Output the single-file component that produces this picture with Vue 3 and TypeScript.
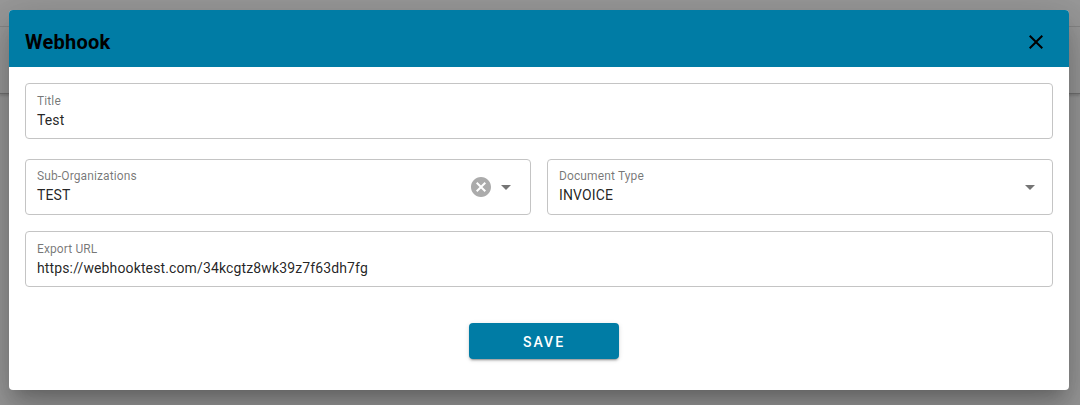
<script setup lang="ts">
const subOrg = 'TEST'
</script>

<template>
  <div class="page">
    <div class="backdrop">
      <div class="strip-top"></div>
      <div class="strip-mid"></div>
    </div>
    <section class="dialog">
      <header class="head">
        <h2>Webhook</h2>
        <svg class="close" width="24" height="24" viewBox="0 0 24 24"><path d="M19 6.41 17.59 5 12 10.59 6.41 5 5 6.41 10.59 12 5 17.59 6.41 19 12 13.41 17.59 19 19 17.59 13.41 12z" /></svg>
      </header>
      <div class="body">
        <div class="field">
          <span class="label">Title</span>
          <span class="value">Test</span>
        </div>
        <div class="row">
          <div class="field select">
            <div class="text">
              <span class="label">Sub-Organizations</span>
              <span class="value">{{ subOrg }}</span>
            </div>
            <svg class="clear" width="24" height="24" viewBox="0 0 24 24"><path d="M12 2C6.47 2 2 6.47 2 12s4.47 10 10 10 10-4.47 10-10S17.53 2 12 2zm5 13.59L15.59 17 12 13.41 8.41 17 7 15.59 10.59 12 7 8.41 8.41 7 12 10.59 15.59 7 17 8.41 13.41 12 17 15.59z" /></svg>
            <svg class="arrow" width="24" height="24" viewBox="0 0 24 24"><path d="M7 10l5 5 5-5z" /></svg>
          </div>
          <div class="field select solo">
            <div class="text">
              <span class="label">Document Type</span>
              <span class="value">INVOICE</span>
            </div>
            <svg class="arrow" width="24" height="24" viewBox="0 0 24 24"><path d="M7 10l5 5 5-5z" /></svg>
          </div>
        </div>
        <div class="field">
          <span class="label">Export URL</span>
          <span class="value">https://webhooktest.com/34kcgtz8wk39z7f63dh7fg</span>
        </div>
        <div class="actions">
          <button type="button" class="save">SAVE</button>
        </div>
      </div>
    </section>
  </div>
</template>

<style scoped>
.page {
  position: relative;
  width: 1080px;
  height: 405px;
  box-sizing: border-box;
  padding: 10px 11px 15px 9px;
  overflow: hidden;
  font-family: Roboto, "Liberation Sans", sans-serif;
  background: #999;
}
.backdrop {
  position: absolute;
  inset: 0;
}
.strip-top {
  height: 27px;
  border-bottom: 1px solid #868686;
  box-sizing: border-box;
}
.strip-mid {
  height: 67px;
  border-bottom: 1px solid #727272;
  box-sizing: border-box;
  box-shadow: 0 2px 2px rgba(0,0,0,.14);
}
.dialog {
  position: relative;
  display: flex;
  flex-direction: column;
  height: 380px;
  border-radius: 4px;
  overflow: hidden;
  background: #fff;
  box-shadow: 0 11px 15px -7px rgba(0,0,0,.2), 0 24px 38px 3px rgba(0,0,0,.14), 0 9px 46px 8px rgba(0,0,0,.12);
}
.head {
  display: flex;
  align-items: center;
  justify-content: space-between;
  box-sizing: border-box;
  height: 57px;
  padding: 6px 21px 0 16px;
  background: #007ca5;
}
.head h2 {
  margin: 0;
  font-size: 20px;
  font-weight: 700;
  letter-spacing: .25px;
  color: #000;
}
.close {
  fill: #000;
}
.body {
  display: flex;
  flex-direction: column;
  padding: 16px 16px 0;
}
.field {
  display: flex;
  flex-direction: column;
  box-sizing: border-box;
  height: 56px;
  padding: 10px 11px 0;
  border: 1px solid #c4c4c4;
  border-radius: 4px;
}
.row {
  display: grid;
  grid-template-columns: 506px 506px;
  gap: 16px;
  margin: 20px 0 16px;
}
.select {
  flex-direction: row;
  align-items: center;
  padding: 0 11px;
}
.text {
  display: flex;
  flex-direction: column;
  flex: 1;
  margin-top: -1px;
}
.label {
  font-size: 12px;
  line-height: 14px;
  letter-spacing: .12px;
  color: rgba(0,0,0,.55);
}
.value {
  margin-top: 3px;
  font-size: 14px;
  line-height: 18px;
  letter-spacing: .13px;
  color: rgba(0,0,0,.87);
}
.clear {
  fill: #ababab;
  margin-right: 1px;
}
.arrow {
  fill: rgba(0,0,0,.54);
  margin-right: 1px;
}
.solo .arrow {
  margin-right: -1px;
}
.actions {
  display: flex;
  justify-content: center;
  margin-top: 36px;
  padding-left: 10px;
}
.save {
  width: 150px;
  height: 36px;
  padding: 2px 0 0;
  border: 0;
  border-radius: 4px;
  background: #007ca5;
  color: #fff;
  font-family: inherit;
  font-size: 14px;
  font-weight: 500;
  letter-spacing: 2px;
  box-shadow: 0 3px 1px -2px rgba(0,0,0,.2), 0 2px 2px 0 rgba(0,0,0,.14), 0 1px 5px 0 rgba(0,0,0,.12);
}
</style>
